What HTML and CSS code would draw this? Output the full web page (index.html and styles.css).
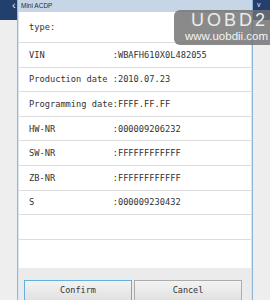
FILE: index.html
```html
<!DOCTYPE html>
<html>
<head>
<meta charset="utf-8">
<link rel="stylesheet" href="styles.css">
</head>
<body>
<div class="screen">
  <div class="side side-left"><span class="glyph">&lsaquo;</span></div>
  <div class="dialog">
    <div class="titlebar">Mini ACDP</div>
    <div class="content">
      <div class="row row-first"><span class="label">type:</span></div>
      <div class="row"><span class="label">VIN</span><span class="value">:WBAFH610X0L482055</span></div>
      <div class="row"><span class="label">Production date </span><span class="value">:2010.07.23</span></div>
      <div class="row"><span class="label">Programming date</span><span class="value">:FFFF.FF.FF</span></div>
      <div class="row"><span class="label">HW-NR</span><span class="value">:000009206232</span></div>
      <div class="row"><span class="label">SW-NR</span><span class="value">:FFFFFFFFFFFF</span></div>
      <div class="row"><span class="label">ZB-NR</span><span class="value">:FFFFFFFFFFFF</span></div>
      <div class="row"><span class="label">S</span><span class="value">:000009230432</span></div>
      <div class="row"></div>
      <div class="blank"></div>
    </div>
    <div class="footer">
      <button class="btn btn-primary">Confirm</button>
      <button class="btn">Cancel</button>
    </div>
  </div>
  <div class="side side-right"><span class="glyph glyph-v">v</span></div>
</div>
<div class="watermark">
  <div class="wm-big">UOBD2</div>
  <div class="wm-small">www.uobdii.com</div>
</div>
</body>
</html>
```

FILE: styles.css
```css
html, body {
  margin: 0;
  padding: 0;
}
body {
  width: 270px;
  height: 300px;
  overflow: hidden;
  position: relative;
  background: linear-gradient(#223f6d 0, #223f6d 20px, #eeeeee 20px);
  font-family: "DejaVu Sans Mono", "Liberation Mono", monospace;
}
.screen {
  display: grid;
  grid-template-columns: 17px 236px 17px;
  height: 300px;
}
.side {
  position: relative;
}
.glyph {
  display: block;
  color: #e6ecf4;
  font-family: "Liberation Sans", sans-serif;
  font-size: 11px;
  line-height: 11px;
  padding-left: 12px;
}
.glyph-v {
  font-size: 7px;
  line-height: 8px;
  padding-left: 4px;
  padding-top: 1px;
}
.dialog {
  display: flex;
  flex-direction: column;
  background: #d8e4ee;
  border-left: 1px solid #9fb6c9;
  border-right: 1px solid #8db6d6;
  height: 300px;
  box-sizing: border-box;
}
.titlebar {
  height: 12px;
  box-sizing: border-box;
  background: #c6d6e6;
  font-family: "Liberation Sans", sans-serif;
  font-size: 6.5px;
  line-height: 12px;
  color: #1d2d40;
  padding-left: 3px;
}
.content {
  background: #ffffff;
  margin: 0 1px;
  display: flex;
  flex-direction: column;
}
.row {
  height: 24.6px;
  box-sizing: border-box;
  border-bottom: 1px solid #dcdcdc;
  display: flex;
  align-items: center;
  padding-left: 10px;
  font-size: 8.7px;
  color: #333333;
  white-space: pre;
}
.row-first {
  height: 31px;
}
.label {
  display: inline-block;
  width: 16ch;
}
.blank {
  height: 28px;
}
.footer {
  flex: 1;
  background: #ebebeb;
  margin: 0 1px;
  display: flex;
  gap: 2px;
  padding: 12px 0 0 5px;
}
.btn {
  width: 108px;
  height: 24px;
  box-sizing: border-box;
  border: 1px solid #acacac;
  background: linear-gradient(#f3f3f3, #dedede);
  font-family: "DejaVu Sans Mono", "Liberation Mono", monospace;
  font-size: 8.5px;
  color: #333333;
  padding: 0 0 4px 0;
  margin: 0;
}
.btn-primary {
  border-color: #63afde;
}
.watermark {
  position: absolute;
  left: 174px;
  top: 10px;
  width: 96px;
  height: 35px;
  background: rgba(112, 112, 112, 0.82);
  border-radius: 6px 0 0 6px;
  font-family: "Liberation Sans", sans-serif;
  color: #ececec;
  white-space: nowrap;
}
.wm-big {
  font-size: 18px;
  line-height: 21px;
  letter-spacing: 3px;
  padding-left: 17px;
}
.wm-small {
  font-size: 11.5px;
  line-height: 11px;
  padding-left: 11px;
  color: #f4f4f4;
}
```
